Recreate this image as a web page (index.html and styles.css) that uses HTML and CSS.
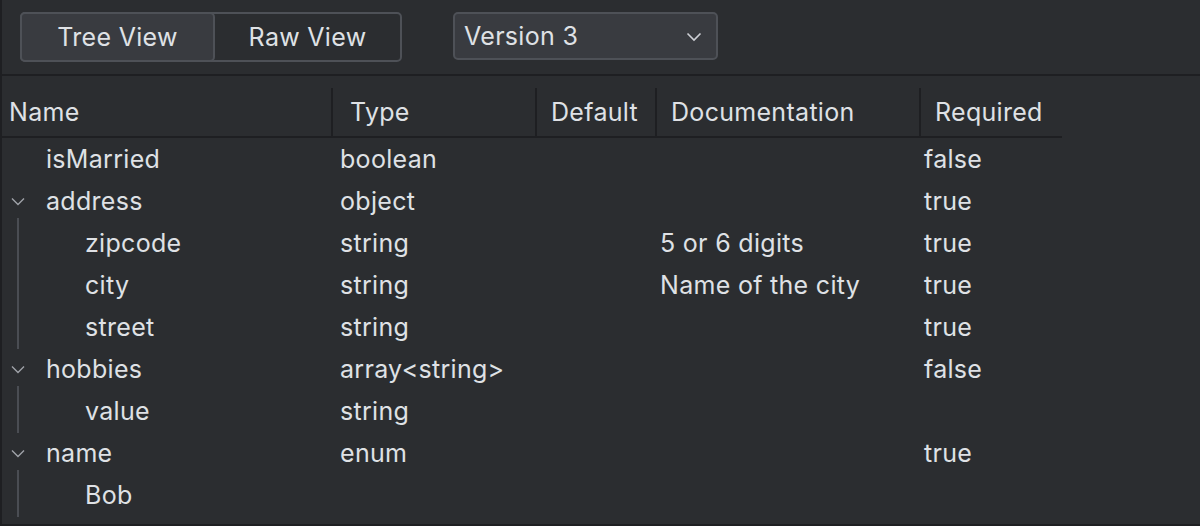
FILE: index.html
```html
<!DOCTYPE html>
<html lang="en">

<head>
    <meta charset="UTF-8">
    <meta name="viewport" content="width=device-width, initial-scale=1.0">
    <title>Schema</title>
    <link rel="stylesheet" href="styles.css">
</head>

<body>
    <div class="panel">
        <div class="toolbar">
            <div class="segmented">
                <button class="seg seg-active">Tree View</button>
                <button class="seg">Raw View</button>
            </div>
            <div class="select">
                <span>Version 3</span>
                <svg class="select-arrow" width="16" height="10" viewBox="0 0 16 10">
                    <path d="M1.5 1.5 L8 8 L14.5 1.5" fill="none" stroke="#ced0d6" stroke-width="1.6" />
                </svg>
            </div>
        </div>

        <div class="table">
            <div class="row head">
                <div class="cell">Name</div>
                <div class="cell col-type">Type</div>
                <div class="cell">Default</div>
                <div class="cell">Documentation</div>
                <div class="cell">Required</div>
            </div>

            <div class="row">
                <div class="cell name lvl0">isMarried</div>
                <div class="cell col-type">boolean</div>
                <div class="cell"></div>
                <div class="cell"></div>
                <div class="cell">false</div>
            </div>

            <div class="row">
                <div class="cell name lvl0">
                    <svg class="chev" width="14" height="9" viewBox="0 0 14 9">
                        <path d="M1 1.5 L7 7.5 L13 1.5" fill="none" stroke="#9fa2a8" stroke-width="1.4" />
                    </svg>
                    address
                </div>
                <div class="cell col-type">object</div>
                <div class="cell"></div>
                <div class="cell"></div>
                <div class="cell">true</div>
            </div>
            <div class="group">
                <div class="row">
                    <div class="cell name lvl1">zipcode</div>
                    <div class="cell col-type">string</div>
                    <div class="cell"></div>
                    <div class="cell">5 or 6 digits</div>
                    <div class="cell">true</div>
                </div>
                <div class="row">
                    <div class="cell name lvl1">city</div>
                    <div class="cell col-type">string</div>
                    <div class="cell"></div>
                    <div class="cell">Name of the city</div>
                    <div class="cell">true</div>
                </div>
                <div class="row">
                    <div class="cell name lvl1">street</div>
                    <div class="cell col-type">string</div>
                    <div class="cell"></div>
                    <div class="cell"></div>
                    <div class="cell">true</div>
                </div>
            </div>

            <div class="row">
                <div class="cell name lvl0">
                    <svg class="chev" width="14" height="9" viewBox="0 0 14 9">
                        <path d="M1 1.5 L7 7.5 L13 1.5" fill="none" stroke="#9fa2a8" stroke-width="1.4" />
                    </svg>
                    hobbies
                </div>
                <div class="cell col-type">array&lt;string&gt;</div>
                <div class="cell"></div>
                <div class="cell"></div>
                <div class="cell">false</div>
            </div>
            <div class="group">
                <div class="row">
                    <div class="cell name lvl1">value</div>
                    <div class="cell col-type">string</div>
                    <div class="cell"></div>
                    <div class="cell"></div>
                    <div class="cell"></div>
                </div>
            </div>

            <div class="row">
                <div class="cell name lvl0">
                    <svg class="chev" width="14" height="9" viewBox="0 0 14 9">
                        <path d="M1 1.5 L7 7.5 L13 1.5" fill="none" stroke="#9fa2a8" stroke-width="1.4" />
                    </svg>
                    name
                </div>
                <div class="cell col-type">enum</div>
                <div class="cell"></div>
                <div class="cell"></div>
                <div class="cell">true</div>
            </div>
            <div class="group">
                <div class="row">
                    <div class="cell name lvl1">Bob</div>
                    <div class="cell col-type"></div>
                    <div class="cell"></div>
                    <div class="cell"></div>
                    <div class="cell"></div>
                </div>
            </div>
        </div>
    </div>
</body>

</html>
```

FILE: styles.css
```css
* {
    box-sizing: border-box;
}

body {
    margin: 0;
    padding: 0;
    background-color: #2b2d30;
    color: #dfe1e5;
    font-family: Inter, "Noto Sans", sans-serif;
    font-size: 25px;
    letter-spacing: 0.3px;
}

.panel {
    height: 526px;
    border-left: 2px solid #1e1f22;
    border-bottom: 2px solid #1e1f22;
}

.toolbar {
    height: 76px;
    border-bottom: 2px solid #1e1f22;
    display: flex;
    align-items: flex-start;
    padding: 12px 0 0 18px;
}

.segmented {
    display: flex;
    width: 382px;
    height: 50px;
    border: 2px solid #4e5157;
    border-radius: 5px;
}

.seg {
    flex: 1;
    background: transparent;
    border: none;
    color: #dfe1e5;
    font-family: inherit;
    font-size: 25px;
    letter-spacing: 0.3px;
    padding: 0;
}

.seg-active {
    flex: 0 0 195px;
    margin: -2px 0 -2px -2px;
    background-color: #393b40;
    border: 2px solid #4e5157;
    border-radius: 5px;
}

.select {
    margin-left: 51px;
    width: 265px;
    height: 48px;
    background-color: #393b40;
    border: 2px solid #4e5157;
    border-radius: 5px;
    display: flex;
    align-items: center;
    justify-content: space-between;
    padding: 0 14px 0 9px;
}

.select-arrow {
    margin-top: 2px;
}

.table {
    padding-top: 12px;
}

.row {
    display: grid;
    grid-template-columns: 329px 204px 120px 264px 143px;
    height: 42px;
}

.row.head {
    height: 50px;
    border-bottom: 2px solid #1e1f22;
    width: 1060px;
}

.cell {
    display: flex;
    align-items: center;
    padding-left: 5px;
    white-space: nowrap;
}

.cell.col-type {
    padding-left: 9px;
}

.head .cell {
    padding-left: 14px;
    border-left: 2px solid #1e1f22;
}

.head .cell:first-child {
    padding-left: 7px;
    border-left: none;
}

.head .cell.col-type {
    padding-left: 17px;
}

.name {
    position: relative;
}

.lvl0 {
    padding-left: 44px;
}

.lvl1 {
    padding-left: 83px;
}

.chev {
    position: absolute;
    left: 9px;
    top: 17px;
}

.group {
    position: relative;
}

.group::before {
    content: "";
    position: absolute;
    left: 15px;
    top: -4px;
    bottom: -1px;
    width: 2px;
    background-color: #4a4d53;
}
```
